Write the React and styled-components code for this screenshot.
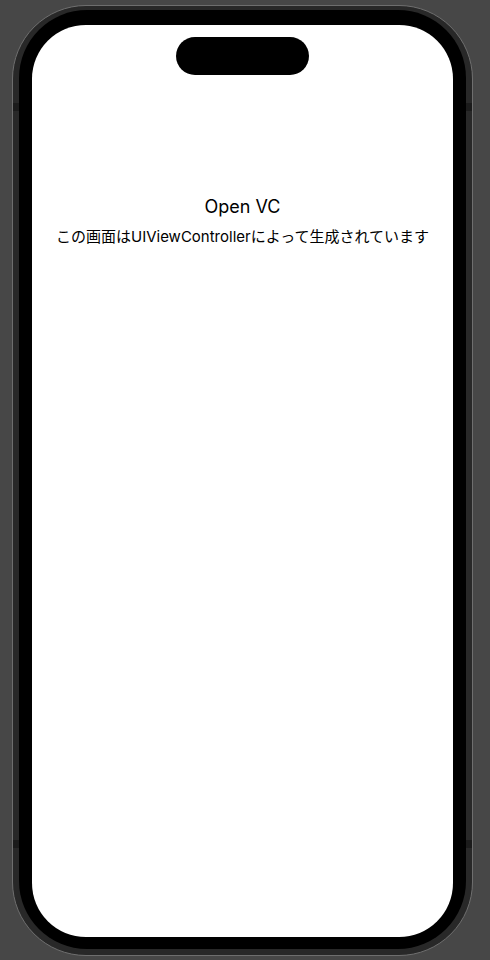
import React from 'react'
import styled, { createGlobalStyle } from 'styled-components'

const GlobalStyle = createGlobalStyle`
  html, body {
    margin: 0;
    padding: 0;
    background: #474747;
  }
  body {
    width: 490px;
    height: 960px;
    overflow: hidden;
  }
`

const Stage = styled.div`
  width: 490px;
  height: 960px;
  padding: 5px 0 0 12px;
  box-sizing: border-box;
`

// frame band with the two antenna lines baked into its background
const Phone = styled.div`
  width: 461px;
  height: 951px;
  box-sizing: border-box;
  border: 1px solid #6e6e6e;
  border-radius: 74px;
  background: linear-gradient(
    to bottom,
    #282828 0 97px,
    #1b1b1b 97px 105px,
    #282828 105px 834px,
    #1b1b1b 834px 842px,
    #282828 842px
  );
  padding: 4px 6px 6px 6px;
  display: flex;
`

const Bezel = styled.div`
  flex: 1;
  display: flex;
  background: #000;
  border-radius: 68px;
  padding: 15px 13px 12px 13px;
`

const Screen = styled.div`
  flex: 1;
  background: #fff;
  border-radius: 54px;
  display: flex;
  flex-direction: column;
  align-items: center;
  padding-top: 12px;
  font-family: Inter, 'Noto Sans CJK JP', sans-serif;
  color: #000;
`

const Island = styled.div`
  width: 133px;
  height: 38px;
  border-radius: 19px;
  background: #000;
`

const Content = styled.div`
  display: flex;
  flex-direction: column;
  align-items: center;
  gap: 9px;
  margin-top: 121px;
`

const Title = styled.div`
  font-size: 18px;
  line-height: 22px;
`

const Subtitle = styled.div`
  font-size: 15px;
  line-height: 20px;
  white-space: nowrap;
`

export default function App() {
  return (
    <>
      <GlobalStyle />
      <Stage>
        <Phone>
          <Bezel>
            <Screen>
              <Island />
              <Content>
                <Title>Open VC</Title>
                <Subtitle>この画面はUIViewControllerによって生成されています</Subtitle>
              </Content>
            </Screen>
          </Bezel>
        </Phone>
      </Stage>
    </>
  )
}
